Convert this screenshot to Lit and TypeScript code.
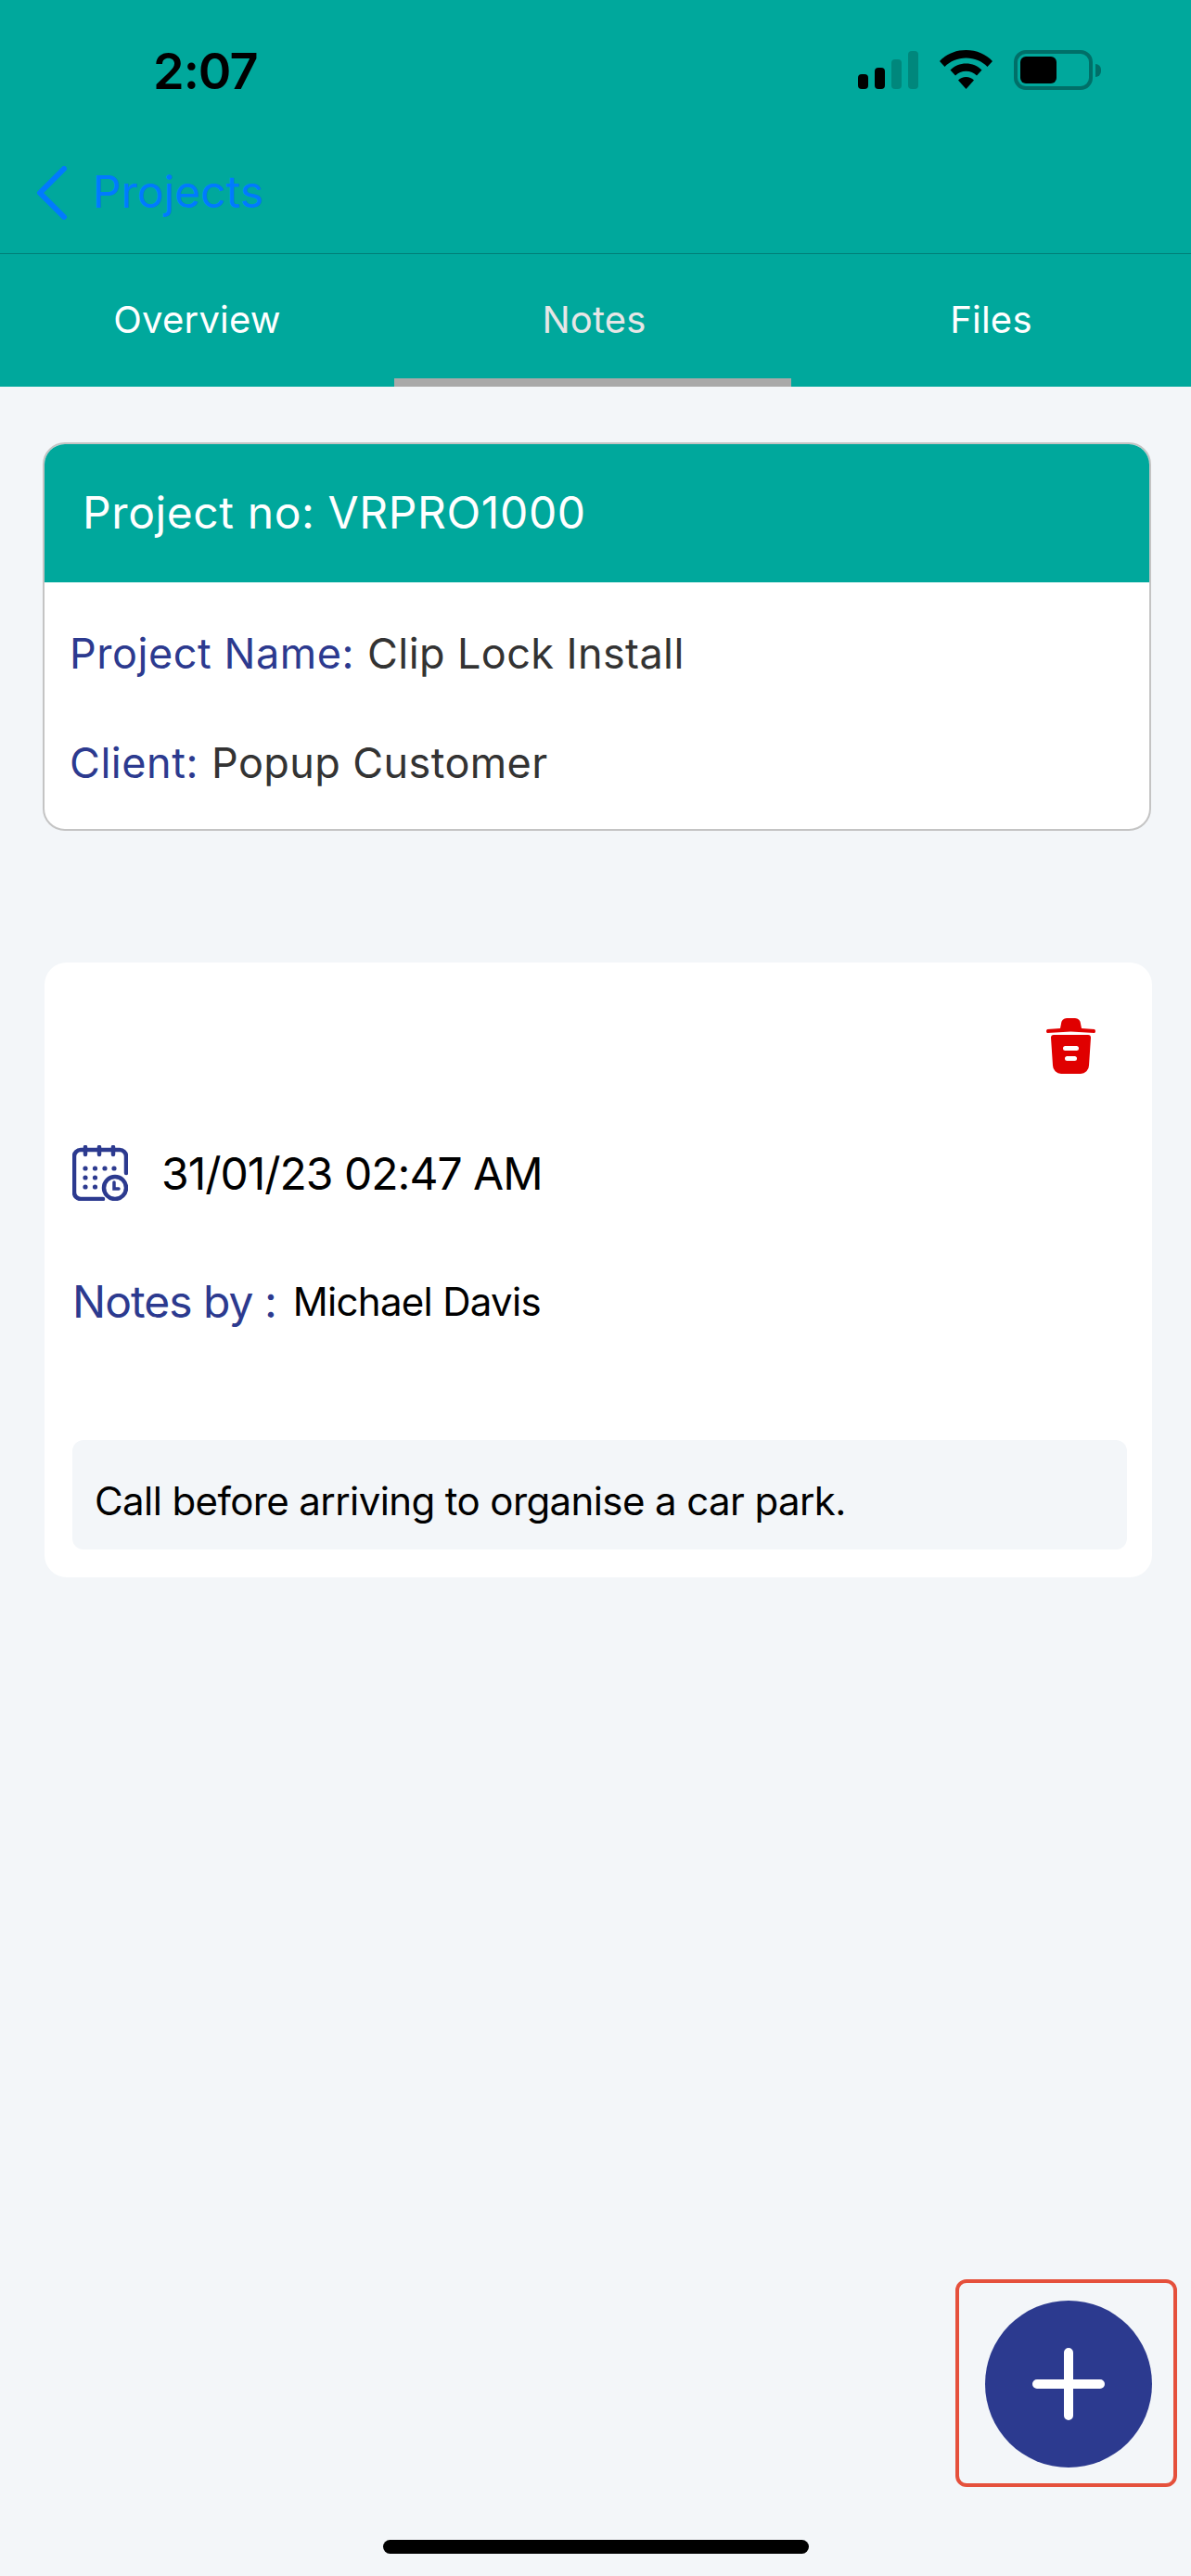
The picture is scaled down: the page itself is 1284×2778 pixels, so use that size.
import { LitElement, html, css, svg } from 'lit';
import { customElement } from 'lit/decorators.js';

const calendarIcon = svg`
  <svg class="cal" viewBox="0 0 60 60" fill="none" stroke="#2c3a8f" stroke-linecap="round">
    <path d="M33 58H9a7 7 0 0 1-7-7V12a7 7 0 0 1 7-7h42a7 7 0 0 1 7 7v18" stroke-width="4.500"/>
    <path d="M14 2v8M29 2v8M44 2v8" stroke-width="4.500"/>
    <g fill="#2c3a8f" stroke="none">
      <circle cx="14" cy="25" r="2.600"/><circle cx="24.500" cy="25" r="2.600"/><circle cx="35" cy="25" r="2.600"/><circle cx="45" cy="25" r="2.600"/>
      <circle cx="14" cy="35" r="2.600"/><circle cx="24.500" cy="35" r="2.600"/>
      <circle cx="14" cy="45" r="2.600"/><circle cx="24.500" cy="45" r="2.600"/>
    </g>
    <circle cx="46" cy="46" r="12" stroke-width="4.500" fill="#fff"/>
    <path d="M45 40v7h5" stroke-width="3.500"/>
  </svg>`;

const trashIcon = svg`
  <svg class="trash" viewBox="0 0 55 60" fill="#e00000">
    <path d="M16 11l1-5a6 6 0 0 1 6-6h9a6 6 0 0 1 6 6l1 5 14 1a2.500 2.500 0 0 1 0 4L27.500 14.500 2 16a2.500 2.500 0 0 1 0-4z"/>
    <path fill-rule="evenodd" d="M9 18h37a3 3 0 0 1 3 3l-2 30a9 9 0 0 1-9 9H17a9 9 0 0 1-9-9L6 21a3 3 0 0 1 3-3zM21.500 30a2.500 2.500 0 0 0 0 5h12a2.500 2.500 0 0 0 0-5zM23.500 41a2.500 2.500 0 0 0 0 5h8a2.500 2.500 0 0 0 0-5z"/>
  </svg>`;

const wifiIcon = svg`
  <svg class="wifi" viewBox="0 0 57 42">
    <path d="M28.500 0C40 0 50 4.500 57 12l-5.500 6C45.500 12 37.500 8.500 28.500 8.500S11.500 12 5.500 18L0 12C7 4.500 17 0 28.500 0z"/>
    <path d="M28.500 14.500c6.500 0 12.500 2.500 17 7l-5.500 6c-3-3-7-4.800-11.500-4.800S20 24.500 17 27.500l-5.500-6c4.500-4.500 10.500-7 17-7z"/>
    <path d="M28.500 29c3.300 0 6.300 1.300 8.500 3.500L28.500 42 20 32.500c2.200-2.200 5.200-3.500 8.500-3.500z"/>
  </svg>`;

@customElement('app-root')
export class AppRoot extends LitElement {
  static styles = css`
    :host {
      display: block;
      position: relative;
      min-height: 2778px;
      background: #f3f6f9;
      font-family: Inter, 'Noto Sans', sans-serif;
      overflow: hidden;
    }

    .top {
      background: #00a89c;
    }

    .status {
      height: 150px;
      box-sizing: border-box;
      display: flex;
      justify-content: space-between;
      padding: 54px 97px 0 165px;
    }

    .time {
      font-size: 54px;
      font-weight: 600;
      line-height: 45px;
      letter-spacing: -1px;
      color: #000;
    }

    .status-icons {
      display: flex;
      align-items: flex-start;
    }

    .signal {
      display: flex;
      align-items: flex-end;
      gap: 7px;
      height: 42px;
      margin-right: 23px;
    }

    .signal i {
      width: 11px;
      border-radius: 4px;
      background: #000;
    }

    .signal i.off {
      background: #00877c;
    }

    .wifi {
      width: 57px;
      height: 42px;
      margin-right: 23px;
    }

    .battery {
      width: 85px;
      height: 43px;
      box-sizing: border-box;
      border: 4px solid #006f68;
      border-radius: 13px;
      padding: 3px;
    }

    .battery i {
      display: block;
      width: 39px;
      height: 29px;
      border-radius: 6px;
      background: #000;
    }

    .nub {
      width: 6px;
      height: 14px;
      margin: 15px 0 0 3px;
      border-radius: 0 7px 7px 0;
      background: #006f68;
    }

    .nav {
      height: 124px;
      box-sizing: border-box;
      display: flex;
      align-items: center;
      gap: 27px;
      padding: 0 0 8px 39px;
      border-bottom: 1px solid #007f78;
    }

    .back {
      width: 34px;
      height: 58px;
    }

    .nav span {
      margin-bottom: 2px;
      font-size: 48px;
      color: #007aff;
    }

    .tabs {
      display: grid;
      grid-template-columns: repeat(3, 428px);
      height: 143px;
      margin-left: -3px;
    }

    .tab {
      display: flex;
      align-items: center;
      justify-content: center;
      padding: 0 0 3px 3px;
      font-size: 40px;
      letter-spacing: 0.2px;
      color: #fff;
    }

    .tab.active {
      color: #e6e6e6;
      box-shadow: inset 0 -9px 0 #a9a9a9;
    }

    .project {
      margin: 60px 43px 0 46px;
      height: 419px;
      box-sizing: border-box;
      border: 2px solid #c4c4c4;
      border-radius: 24px;
      background: #fff;
      overflow: hidden;
    }

    .project-head {
      height: 149px;
      box-sizing: border-box;
      display: flex;
      align-items: center;
      padding: 0 0 2px 41px;
      background: #00a89c;
      color: #fff;
      font-size: 48px;
      letter-spacing: 0.6px;
    }

    .project-row {
      display: flex;
      gap: 14px;
      padding: 44px 0 0 27px;
      font-size: 45px;
      line-height: 65px;
      letter-spacing: 0.4px;
      color: #333;
    }

    .project-row + .project-row {
      padding-top: 53px;
    }

    .label {
      color: #2c3a8f;
    }

    .project-row .label {
      letter-spacing: 0.55px;
    }

    .note {
      margin: 142px 42px 0 48px;
      height: 663px;
      box-sizing: border-box;
      padding: 60px 27px 30px 30px;
      border-radius: 24px;
      background: #fff;
      display: flex;
      flex-direction: column;
    }

    .note-actions {
      display: flex;
      justify-content: flex-end;
      padding-right: 33px;
    }

    .trash {
      width: 55px;
      height: 60px;
    }

    .note-date {
      display: flex;
      align-items: center;
      gap: 36px;
      margin-top: 77px;
      font-size: 48px;
      letter-spacing: -1px;
      color: #000;
    }

    .cal {
      width: 60px;
      height: 60px;
      flex: none;
    }

    .note-by {
      display: flex;
      align-items: center;
      gap: 18px;
      margin-top: 79px;
      font-size: 42px;
      letter-spacing: -0.7px;
      color: #000;
    }

    .note-by .label {
      font-size: 48px;
      letter-spacing: -1px;
    }

    .note-body {
      margin-top: auto;
      height: 118px;
      box-sizing: border-box;
      display: flex;
      align-items: center;
      padding: 12px 0 0 24px;
      border-radius: 12px;
      background: #f3f6f9;
      font-size: 42px;
      letter-spacing: -0.6px;
      color: #000;
    }

    .fab-mark {
      position: absolute;
      left: 1030px;
      top: 2458px;
      width: 239px;
      height: 224px;
      box-sizing: border-box;
      border: 4px solid #e5503c;
      border-radius: 12px;
    }

    .fab {
      position: absolute;
      left: 1062px;
      top: 2481px;
      width: 180px;
      height: 180px;
      border-radius: 50%;
      background: #2c3a8f;
    }

    .fab svg {
      display: block;
      width: 180px;
      height: 180px;
    }

    .home {
      position: absolute;
      left: 413px;
      top: 2739px;
      width: 459px;
      height: 15px;
      border-radius: 8px;
      background: #000;
    }
  `;

  render() {
    return html`
      <div class="top">
        <div class="status">
          <div class="time">2:07</div>
          <div class="status-icons">
            <div class="signal">
              <i style="height:16px"></i>
              <i style="height:23px"></i>
              <i class="off" style="height:32px"></i>
              <i class="off" style="height:41px"></i>
            </div>
            ${wifiIcon}
            <div class="battery"><i></i></div>
            <div class="nub"></div>
          </div>
        </div>
        <div class="nav">
          <svg class="back" viewBox="0 0 34 58" fill="none" stroke="#007aff" stroke-width="6" stroke-linecap="round" stroke-linejoin="round">
            <path d="M30 3L4 29l26 26"/>
          </svg>
          <span>Projects</span>
        </div>
        <div class="tabs">
          <div class="tab">Overview</div>
          <div class="tab active">Notes</div>
          <div class="tab">Files</div>
        </div>
      </div>

      <section class="project">
        <div class="project-head">Project no: VRPRO1000</div>
        <div class="project-row"><span class="label">Project Name:</span><span>Clip Lock Install</span></div>
        <div class="project-row"><span class="label">Client:</span><span>Popup Customer</span></div>
      </section>

      <section class="note">
        <div class="note-actions">${trashIcon}</div>
        <div class="note-date">${calendarIcon}<span>31/01/23 02:47 AM</span></div>
        <div class="note-by"><span class="label">Notes by :</span><span>Michael Davis</span></div>
        <div class="note-body">Call before arriving to organise a car park.</div>
      </section>

      <div class="fab-mark"></div>
      <div class="fab">
        <svg viewBox="0 0 180 180" fill="none" stroke="#fff" stroke-width="10" stroke-linecap="round">
          <path d="M90 56v68M56 90h68"/>
        </svg>
      </div>
      <div class="home"></div>
    `;
  }
}

declare global {
  interface HTMLElementTagNameMap {
    'app-root': AppRoot;
  }
}
